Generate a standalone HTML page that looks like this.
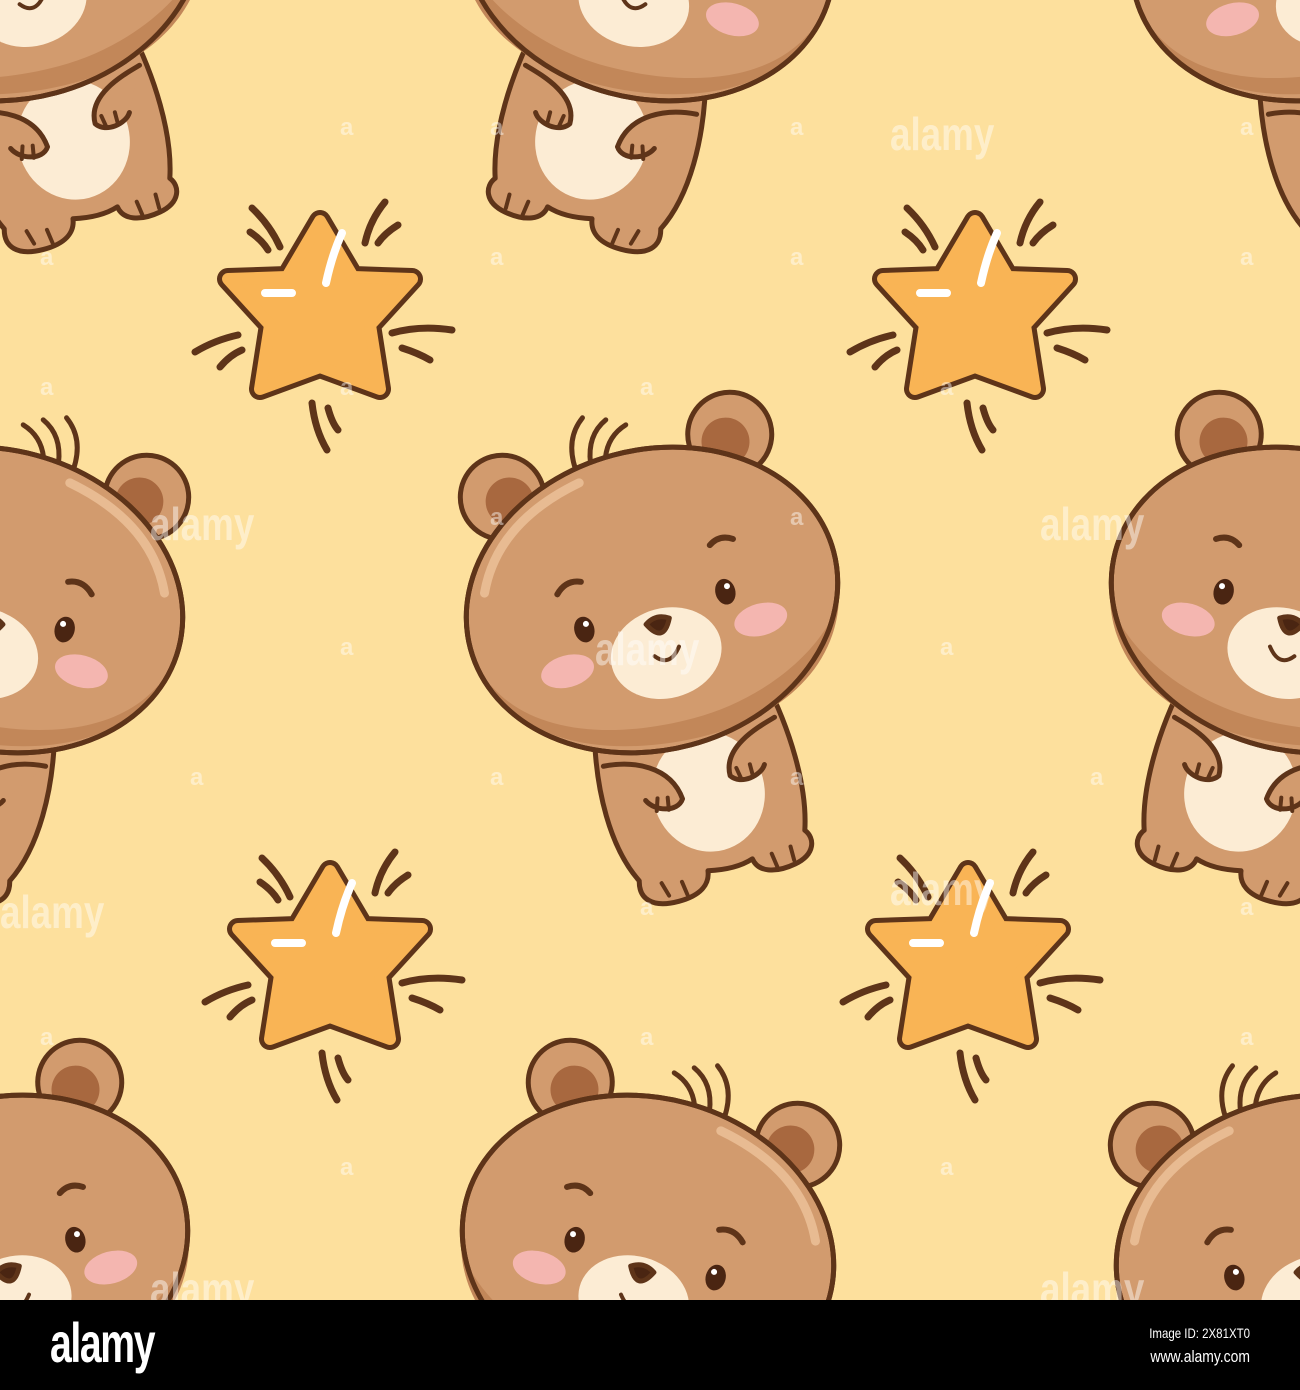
<!DOCTYPE html>
<html><head><meta charset="utf-8"><style>
html,body{margin:0;padding:0;background:#000;width:1300px;height:1390px;overflow:hidden;}
svg{display:block;}
.wm{font-family:"Liberation Sans",sans-serif;font-weight:bold;fill:#fff;fill-opacity:0.45;}
</style></head><body>
<svg width="1300" height="1390" viewBox="0 0 1300 1390" xmlns="http://www.w3.org/2000/svg">
<defs>
<g id="bear" stroke="#5e3419" stroke-width="5" stroke-linecap="round" stroke-linejoin="round">
  <path d="M-88,105 C-105,170 -104,230 -85,268 C-90,285 -80,298 -52,298 C-30,298 -18,290 -16,276 C2,280 18,280 30,276 C32,290 48,296 70,292 C92,288 96,272 88,262 C102,220 100,160 88,105 Z" fill="#d29b6e"/>
  <ellipse cx="5" cy="200" rx="56" ry="60" fill="#fcecd4" stroke="none"/>
  <path d="M-60,290 l-4,-14 M-42,294 l-2,-14 M52,290 l-2,-14 M70,288 l0,-14" fill="none" stroke-width="4"/>
  <path d="M-90,148 C-60,150 -25,165 -22,200 C-30,212 -52,205 -58,192" fill="#d29b6e"/>
  <path d="M-50,205 l4,-12 M-38,207 l2,-12" fill="none" stroke-width="4"/>
  <path d="M88,145 C70,150 30,160 30,190 C38,202 60,198 66,188" fill="#d29b6e"/>
  <path d="M40,196 l-2,-12 M52,196 l0,-12" fill="none" stroke-width="4"/>
  <circle cx="-118" cy="-138" r="42" fill="#d29b6e"/>
  <circle cx="-112" cy="-132" r="24" fill="#a8683f" stroke="none"/>
  <circle cx="118" cy="-140" r="42" fill="#d29b6e"/>
  <circle cx="112" cy="-134" r="24" fill="#a8683f" stroke="none"/>
  <path d="M-40,-146 Q-42,-178 -20,-194 M-24,-148 Q-20,-176 2,-186 M-8,-150 Q0,-170 20,-176" fill="none"/>
  <ellipse cx="0" cy="0" rx="188" ry="150" fill="#d29b6e"/>
  <path d="M-178,40 C-160,110 -70,145 20,145 C100,145 160,110 180,50 C150,95 80,125 10,125 C-70,125 -150,100 -178,40 Z" fill="#c28759" stroke="none"/>
  <ellipse cx="0" cy="0" rx="188" ry="150" fill="none"/>
  <path d="M-160,-50 Q-130,-115 -40,-132" fill="none" stroke="#e8bb92" stroke-width="9"/>
  <path d="M-90,-30 Q-78,-42 -64,-36 M70,-38 Q82,-46 94,-38" fill="none" stroke-width="6"/>
  <ellipse cx="-100" cy="47" rx="27" ry="16" fill="#f4b6b0" stroke="none"/>
  <ellipse cx="100" cy="47" rx="27" ry="16" fill="#f4b6b0" stroke="none"/>
  <ellipse cx="0" cy="55" rx="56" ry="45" fill="#fcecd4" stroke="none"/>
  <ellipse cx="-73" cy="11" rx="10" ry="13" fill="#4a2512" stroke="none"/>
  <ellipse cx="73" cy="11" rx="10" ry="13" fill="#4a2512" stroke="none"/>
  <circle cx="-70" cy="6" r="3" fill="#fff" stroke="none"/>
  <circle cx="76" cy="6" r="3" fill="#fff" stroke="none"/>
  <path d="M-12,22 Q0,14 12,22 Q6,34 0,34 Q-6,34 -12,22 Z" fill="#4a2512"/>
  <path d="M-12,55 Q0,70 14,52" fill="none" stroke-width="4"/>
</g>
<g id="star" stroke="#5e3419" stroke-linecap="round" stroke-linejoin="round" fill="none">
  <path d="M0,-84 L33,-28 L92,-26 L50,20 L60,84 L0,62 L-60,84 L-50,20 L-92,-26 L-33,-28 Z" fill="#f9b455" stroke-width="22"/>
  <path d="M0,-84 L33,-28 L92,-26 L50,20 L60,84 L0,62 L-60,84 L-50,20 L-92,-26 L-33,-28 Z" fill="#f9b455" stroke="#f9b455" stroke-width="12"/>
  <path d="M22,-72 Q12,-50 6,-22 M-55,-12 L-28,-12" stroke="#fff" stroke-width="8"/>
  <path d="M-68,-97 Q-50,-80 -40,-58 M-70,-73 Q-58,-65 -52,-55 M65,-103 Q50,-85 45,-62 M78,-80 Q65,-72 58,-62 M-125,47 Q-105,35 -82,30 M-100,62 Q-90,50 -78,45 M72,28 Q100,20 132,25 M82,43 Q98,48 110,55 M-8,98 Q-5,125 7,145 M8,103 Q12,118 18,125" stroke-width="7"/>
</g>
</defs>
<rect x="0" y="0" width="1300" height="1300" fill="#fde09d"/>
<use href="#star" transform="translate(320,305)"/>
<use href="#star" transform="translate(975,305)"/>
<use href="#star" transform="translate(330,955)"/>
<use href="#star" transform="translate(968,955)"/>
<use href="#bear" transform="translate(17,-52) rotate(-15)"/>
<use href="#bear" transform="translate(648,-52) scale(-1,1) rotate(-15)"/>
<use href="#bear" transform="translate(1317,-52) rotate(-15)"/>
<use href="#bear" transform="translate(-3,600) scale(-1,1) rotate(-15)"/>
<use href="#bear" transform="translate(652,600) rotate(-15)"/>
<use href="#bear" transform="translate(1297,600) scale(-1,1) rotate(-15)"/>
<use href="#bear" transform="translate(2,1248) rotate(-15)"/>
<use href="#bear" transform="translate(648,1248) scale(-1,1) rotate(-15)"/>
<use href="#bear" transform="translate(1302,1248) rotate(-15)"/>
<g class="wm" font-size="46">
<text x="890" y="150" transform="translate(890,150) scale(0.8,1) translate(-890,-150)">alamy</text>
<text x="150" y="540" transform="translate(150,540) scale(0.8,1) translate(-150,-540)">alamy</text>
<text x="1040" y="540" transform="translate(1040,540) scale(0.8,1) translate(-1040,-540)">alamy</text>
<text x="595" y="665" transform="translate(595,665) scale(0.8,1) translate(-595,-665)">alamy</text>
<text x="0" y="928" transform="translate(0,928) scale(0.8,1) translate(0,-928)">alamy</text>
<text x="890" y="905" transform="translate(890,905) scale(0.8,1) translate(-890,-905)">alamy</text>
<text x="150" y="1305" transform="translate(150,1305) scale(0.8,1) translate(-150,-1305)">alamy</text>
<text x="1040" y="1305" transform="translate(1040,1305) scale(0.8,1) translate(-1040,-1305)">alamy</text>
</g>
<g class="wm" font-size="24" fill-opacity="0.35">
<text x="340" y="135">a</text><text x="490" y="135">a</text><text x="790" y="135">a</text><text x="1240" y="135">a</text>
<text x="40" y="265">a</text><text x="490" y="265">a</text><text x="790" y="265">a</text><text x="1240" y="265">a</text>
<text x="40" y="395">a</text><text x="340" y="395">a</text><text x="640" y="395">a</text><text x="940" y="395">a</text>
<text x="490" y="525">a</text><text x="790" y="525">a</text>
<text x="340" y="655">a</text><text x="940" y="655">a</text>
<text x="190" y="785">a</text><text x="490" y="785">a</text><text x="790" y="785">a</text><text x="1090" y="785">a</text>
<text x="640" y="915">a</text><text x="1240" y="915">a</text>
<text x="40" y="1045">a</text><text x="640" y="1045">a</text><text x="1240" y="1045">a</text>
<text x="340" y="1175">a</text><text x="940" y="1175">a</text>
</g>
<rect x="0" y="1300" width="1300" height="90" fill="#000"/>
<text x="50" y="1362" font-family="'Liberation Sans',sans-serif" font-weight="bold" font-size="56" fill="#fff" transform="translate(50,1362) scale(0.7,1) translate(-50,-1362)" letter-spacing="-2">alamy</text>
<text x="1250" y="1338" text-anchor="end" font-family="'Liberation Sans',sans-serif" font-size="14" fill="#fff" transform="translate(1250,1338) scale(0.82,1) translate(-1250,-1338)">Image ID: 2X81XT0</text>
<text x="1250" y="1362" text-anchor="end" font-family="'Liberation Sans',sans-serif" font-size="17" fill="#fff" transform="translate(1250,1362) scale(0.82,1) translate(-1250,-1362)">www.alamy.com</text>
</svg>
</body></html>
